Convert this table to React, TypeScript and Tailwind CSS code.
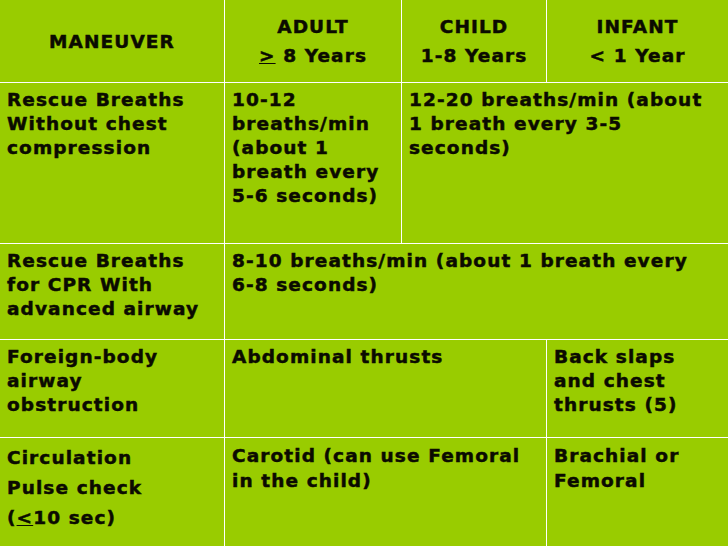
const cell = "bg-[#99cc00] pl-[7px] pt-[5px] leading-[24px] whitespace-nowrap";
const headCell =
  "bg-[#99cc00] flex flex-col items-center justify-center text-center leading-[29px]";

export default function App() {
  return (
    <div
      className="w-[728px] h-[546px] bg-white grid grid-cols-[224px_176px_144px_181px] grid-rows-[82px_160px_95px_97px_108px] gap-px text-[18.5px] font-bold tracking-[1.1px] text-[#0b0b00] [-webkit-text-stroke:0.5px_#0b0b00]"
      style={{ fontFamily: '"DejaVu Sans", Verdana, sans-serif' }}
    >
      {/* header */}
      <div className={headCell}>MANEUVER</div>
      <div className={headCell}>
        <span>ADULT</span>
        <span>
          <span className="underline">&gt;</span> 8 Years
        </span>
      </div>
      <div className={headCell}>
        <span>CHILD</span>
        <span>1-8 Years</span>
      </div>
      <div className={headCell}>
        <span>INFANT</span>
        <span>&lt; 1 Year</span>
      </div>

      {/* rescue breaths without compression */}
      <div className={cell}>
        Rescue Breaths
        <br />
        Without chest
        <br />
        compression
      </div>
      <div className={cell}>
        10-12
        <br />
        breaths/min
        <br />
        (about 1
        <br />
        breath every
        <br />
        5-6 seconds)
      </div>
      <div className={`${cell} col-span-2`}>
        12-20 breaths/min (about
        <br />1 breath every 3-5
        <br />
        seconds)
      </div>

      {/* rescue breaths with airway */}
      <div className={cell}>
        Rescue Breaths
        <br />
        for CPR With
        <br />
        advanced airway
      </div>
      <div className={`${cell} col-span-3`}>
        8-10 breaths/min (about 1 breath every
        <br />
        6-8 seconds)
      </div>

      {/* foreign body */}
      <div className={cell}>
        Foreign-body
        <br />
        airway
        <br />
        obstruction
      </div>
      <div className={`${cell} col-span-2`}>Abdominal thrusts</div>
      <div className={cell}>
        Back slaps
        <br />
        and chest
        <br />
        thrusts (5)
      </div>

      {/* circulation */}
      <div className={`${cell} leading-[30px] pt-[2px]`}>
        Circulation
        <br />
        Pulse check
        <br />(<span className="underline">&lt;</span>10 sec)
      </div>
      <div className={`${cell} col-span-2 leading-[25px] pt-[4px]`}>
        Carotid (can use Femoral
        <br />
        in the child)
      </div>
      <div className={`${cell} leading-[25px] pt-[4px]`}>
        Brachial or
        <br />
        Femoral
      </div>
    </div>
  );
}
